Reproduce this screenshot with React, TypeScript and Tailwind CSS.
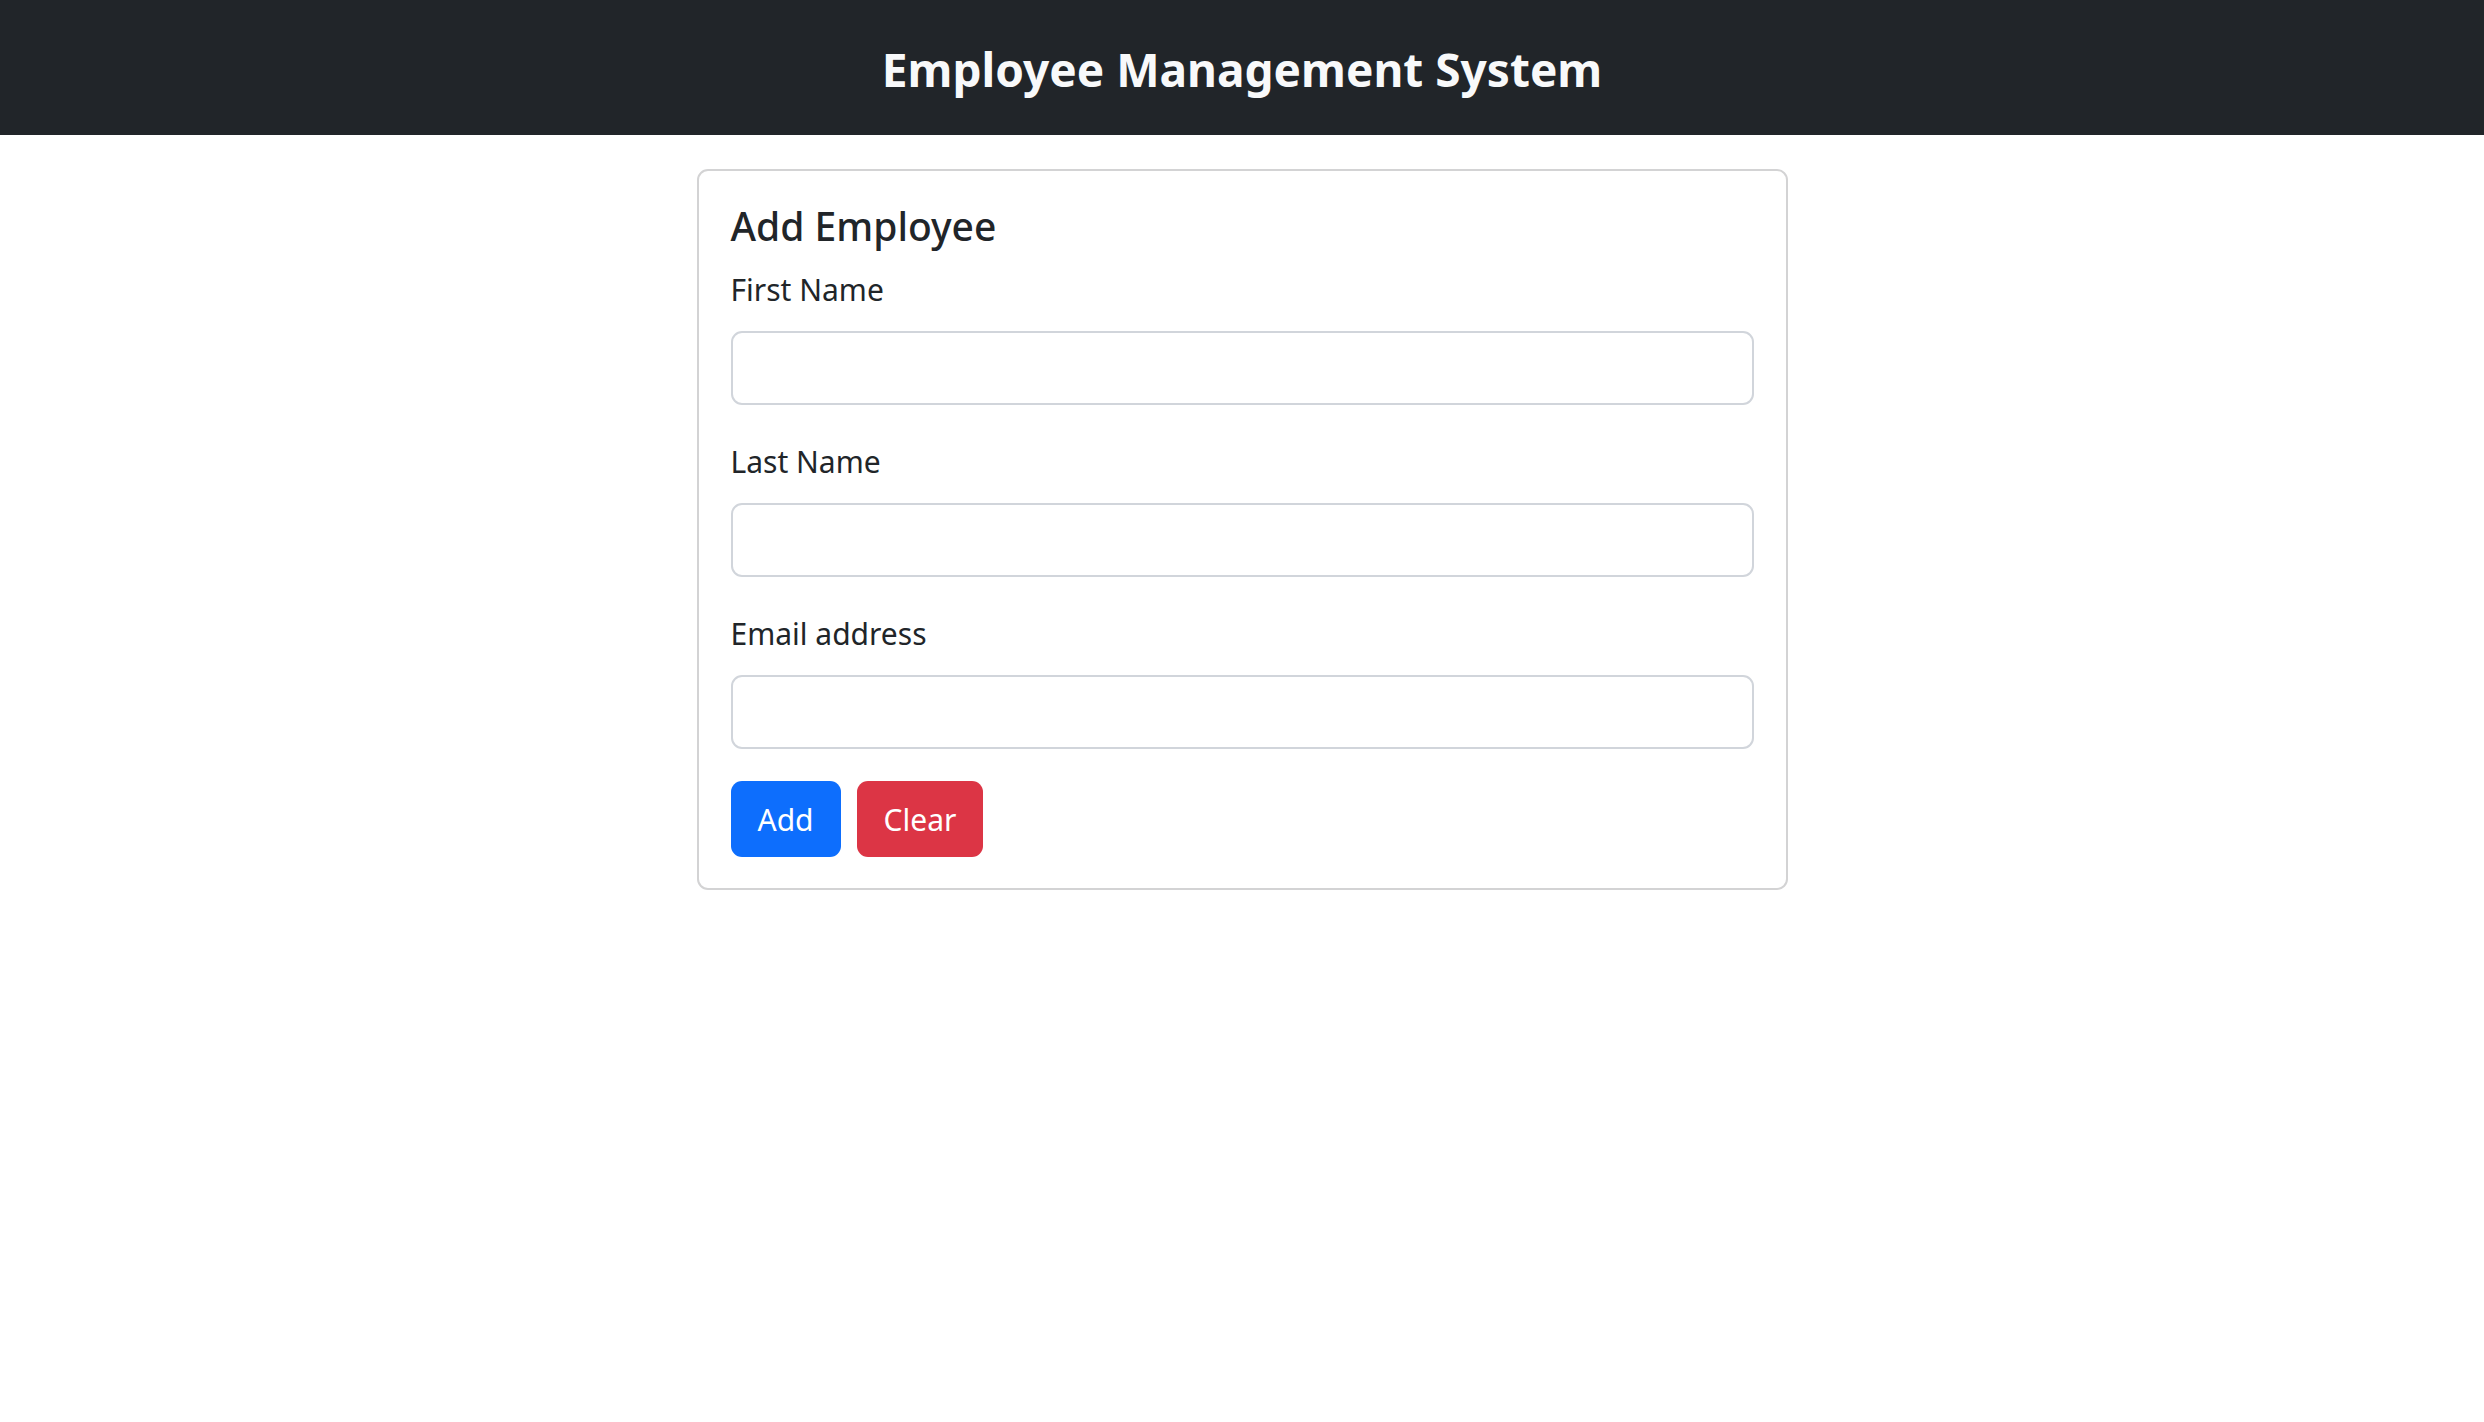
export default function App() {
  const fields = [
    { id: "firstName", label: "First Name", type: "text" },
    { id: "lastName", label: "Last Name", type: "text" },
    { id: "email", label: "Email address", type: "email" },
  ];

  function handleSubmit(event: React.FormEvent<HTMLFormElement>) {
    event.preventDefault();
  }

  return (
    <div className="min-h-screen bg-white font-['Noto_Sans',sans-serif] text-[#212529]">
      <nav className="flex h-[135px] items-center justify-center bg-[#212529] pt-[4px]">
        <h1 className="text-[46px] font-bold leading-[1.2] text-[#f8f9fa]">Employee Management System</h1>
      </nav>

      <div className="flex justify-center pt-[34px]">
        <form
          onSubmit={handleSubmit}
          className="w-[1091px] rounded-[11px] border-2 border-[#d3d3d4] bg-white px-[32px] pt-[31px] pb-[31px]"
        >
          <h2 className="mb-[15px] text-[39px] font-medium leading-[48px]">Add Employee</h2>

          {fields.map((field) => (
            <div key={field.id} className="mb-[32px]">
              <label htmlFor={field.id} className="mb-[18px] block pt-[2px] text-[30px] leading-[46px]">
                {field.label}
              </label>
              <input
                id={field.id}
                type={field.type}
                className="block h-[74px] w-full rounded-[11px] border-2 border-[#d1d5db] bg-white px-[22px] text-[30px] outline-none"
              />
            </div>
          ))}

          <div className="flex gap-[16px]">
            <button type="submit" className="h-[76px] rounded-[11px] bg-[#0d6efd] px-[27px] text-[30px] text-white">
              Add
            </button>
            <button type="reset" className="h-[76px] rounded-[11px] bg-[#dc3545] px-[27px] text-[30px] text-white">
              Clear
            </button>
          </div>
        </form>
      </div>
    </div>
  );
}
